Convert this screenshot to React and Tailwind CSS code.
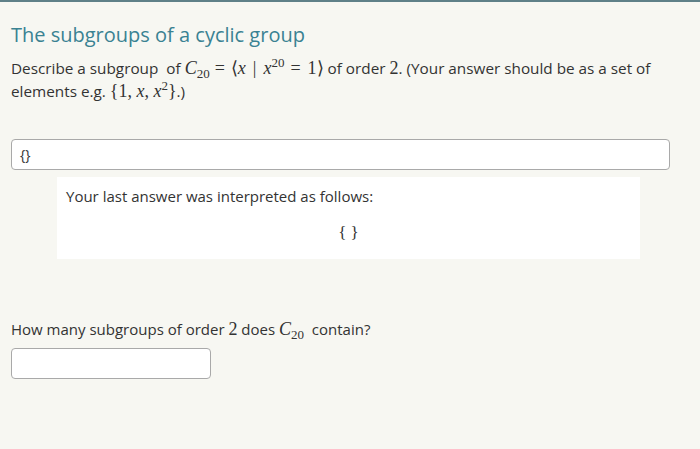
import React from 'react'

const M = ({ children, className = '' }) => (
  <span className={`font-['Liberation_Serif',serif] text-[18px] leading-none ${className}`}>{children}</span>
)

const Sub = ({ children }) => (
  <span className="relative top-[4px] text-[13px] leading-none">{children}</span>
)

const Sup = ({ children }) => (
  <span className="relative top-[-7px] text-[13px] leading-none">{children}</span>
)

const C20 = () => (
  <M>
    <i>C</i>
    <Sub>20</Sub>
  </M>
)

export default function App() {
  return (
    <div className="w-[700px] h-[449px] bg-[#f7f7f2] border-t-2 border-[#5f8088] font-['Open_Sans',sans-serif] text-[#333] overflow-hidden">
      <div className="px-[11px] pt-[18px]">
        <h1 className="text-[20px] text-[#3a8292] leading-[30px]">The subgroups of a cyclic group</h1>
        <p className="mt-[7px] text-[15.3px] leading-[23px]">
          Describe a subgroup&nbsp; of <C20 />
          <M>
            <span className="ml-[5px] mr-[6px]">=</span>⟨<i>x</i>
            <span className="mx-[7px]">|</span>
            <i>x</i><Sup>20</Sup>
            <span className="ml-[6px] mr-[7px]">=</span>1⟩
          </M>{' '}
          of order <M>2</M>. (Your answer should be as a set of
          <br />
          elements e.g. <M>{'{'}1, <i>x</i>, <i>x</i><Sup>2</Sup>{'}'}</M>.)
        </p>

        <div className="mt-[36px] mr-[19px] h-[31px] bg-white border border-[#a9a9a9] rounded-[4px] px-[8px] flex items-center text-[14px]">
          {'{}'}
        </div>

        <div className="mt-[7px] ml-[46px] mr-[49px] h-[82px] bg-white px-[9px] pt-[7px]">
          <div className="text-[15px] leading-[24px]">Your last answer was interpreted as follows:</div>
          <div className="mt-[12px] text-center font-['Liberation_Serif',serif] text-[17px]">{'{ }'}</div>
        </div>

        <p className="mt-[58px] text-[15px] leading-[24px]">
          How many subgroups of order <M>2</M> does <C20 />&nbsp; contain?
        </p>
        <div className="mt-[7px] w-[200px] h-[31px] bg-white border border-[#a9a9a9] rounded-[4px]"></div>
      </div>
    </div>
  )
}
